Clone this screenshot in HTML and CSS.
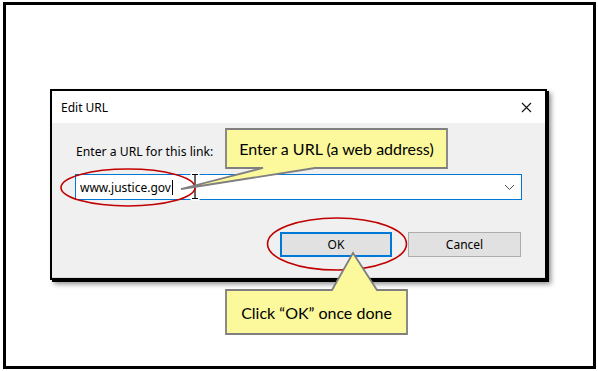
FILE: index.html
```html
<!DOCTYPE html>
<html>
<head>
<meta charset="utf-8">
<link rel="stylesheet" href="styles.css">
</head>
<body>
<div class="frame">
  <div class="dialog">
    <div class="titlebar">
      <span class="title">Edit URL</span>
      <svg class="close" width="11" height="11" viewBox="0 0 11 11"><path d="M1 1 L10 10 M10 1 L1 10" stroke="#111" stroke-width="1.1" fill="none"/></svg>
    </div>
    <div class="body">
      <div class="label">Enter a URL for this link:</div>
      <div class="input">
        <span class="value">www.justice.gov</span><span class="caret"></span>
        <svg class="chevron" width="11" height="7" viewBox="0 0 11 7"><path d="M1 1 L5.5 5.5 L10 1" stroke="#505050" stroke-width="1" fill="none"/></svg>
      </div>
      <div class="buttons">
        <div class="btn btn-default">OK</div>
        <div class="btn">Cancel</div>
      </div>
    </div>
  </div>
</div>

<svg class="overlay" width="598" height="371" viewBox="0 0 598 371">
  <!-- I-beam cursor -->
  <g stroke="#fff" stroke-width="3" fill="none" stroke-linecap="square">
    <path d="M195 175 V198 M192 174 H198 M192 199 H198"/>
  </g>
  <g stroke="#000" stroke-width="1.2" fill="none">
    <path d="M195 175 V198 M192 174.5 H198 M192 198.5 H198"/>
  </g>
  <!-- red ellipses -->
  <ellipse cx="128" cy="187.5" rx="67" ry="18.5" fill="none" stroke="#c00000" stroke-width="1.6"/>
  <ellipse cx="337" cy="244" rx="69.5" ry="26" fill="none" stroke="#c00000" stroke-width="1.6"/>
  <!-- callout 1 -->
  <path d="M226 129 H447 V168 H315 L181 189 L263 168 H226 Z" fill="#fbf99c" stroke="#7f7f7f" stroke-width="1.8" stroke-linejoin="miter"/>
  <!-- callout 2 -->
  <path d="M226 290 H332 L353 253 L377 290 H407 V334 H226 Z" fill="#fbf99c" stroke="#7f7f7f" stroke-width="1.8" stroke-linejoin="miter"/>
</svg>
<div class="callout callout-url">Enter a URL (a web address)</div>
<div class="callout callout-ok">Click “OK” once done</div>
</body>
</html>
```

FILE: styles.css
```css
html, body {
  margin: 0;
  padding: 0;
}
body {
  width: 598px;
  height: 371px;
  background: #fff;
  position: relative;
  overflow: hidden;
  font-family: "Segoe UI", "Noto Sans", "Open Sans", sans-serif;
}
.frame {
  box-sizing: border-box;
  margin: 2px 0 0 3px;
  width: 593px;
  height: 367px;
  border: 3px solid #000;
  padding: 84px 0 0 44px;
}
.dialog {
  box-sizing: border-box;
  width: 497px;
  height: 191px;
  border: 2px solid #000;
  box-shadow: 2px 2px 0 #000, 4px 4px 5px rgba(0, 0, 0, 0.45);
  display: flex;
  flex-direction: column;
  background: #fff;
}
.titlebar {
  height: 32px;
  display: flex;
  align-items: center;
  justify-content: space-between;
  padding: 0 13px 0 9px;
  background: #fff;
}
.title {
  font-size: 12px;
  color: #000;
  margin-top: 1px;
}
.close {
  display: block;
  margin-top: 1px;
}
.body {
  flex: 1;
  background: #f0f0f0;
  padding: 21px 24px 0 23px;
  border-bottom: 1px solid #dcdcdc;
}
.label {
  font-size: 12.2px;
  line-height: 16px;
  color: #000;
  padding-left: 1px;
}
.input {
  box-sizing: border-box;
  margin-top: 14px;
  width: 447px;
  height: 26px;
  border: 1px solid #0078d7;
  background: #fff;
  display: flex;
  align-items: center;
  padding-left: 4px;
  position: relative;
}
.value {
  font-size: 12px;
  color: #000;
}
.caret {
  width: 1px;
  height: 15px;
  background: #000;
  margin-left: 1px;
}
.chevron {
  position: absolute;
  right: 6px;
  top: 9px;
}
.buttons {
  display: flex;
  justify-content: flex-end;
  gap: 16px;
  margin-top: 32px;
}
.btn {
  box-sizing: border-box;
  width: 113px;
  height: 25px;
  background: #e1e1e1;
  border: 1px solid #adadad;
  font-size: 12px;
  color: #000;
  display: flex;
  align-items: center;
  justify-content: center;
}
.btn-default {
  width: 112px;
  border: 2px solid #0078d7;
}
.overlay {
  position: absolute;
  left: 0;
  top: 0;
  pointer-events: none;
}
.callout {
  position: absolute;
  font-family: "Lato", "Liberation Sans", sans-serif;
  font-size: 16px;
  color: #000;
  display: flex;
  align-items: center;
  justify-content: center;
}
.callout-url {
  left: 226px;
  top: 129px;
  width: 221px;
  height: 39px;
}
.callout-ok {
  left: 226px;
  top: 290px;
  width: 181px;
  height: 44px;
}
```
